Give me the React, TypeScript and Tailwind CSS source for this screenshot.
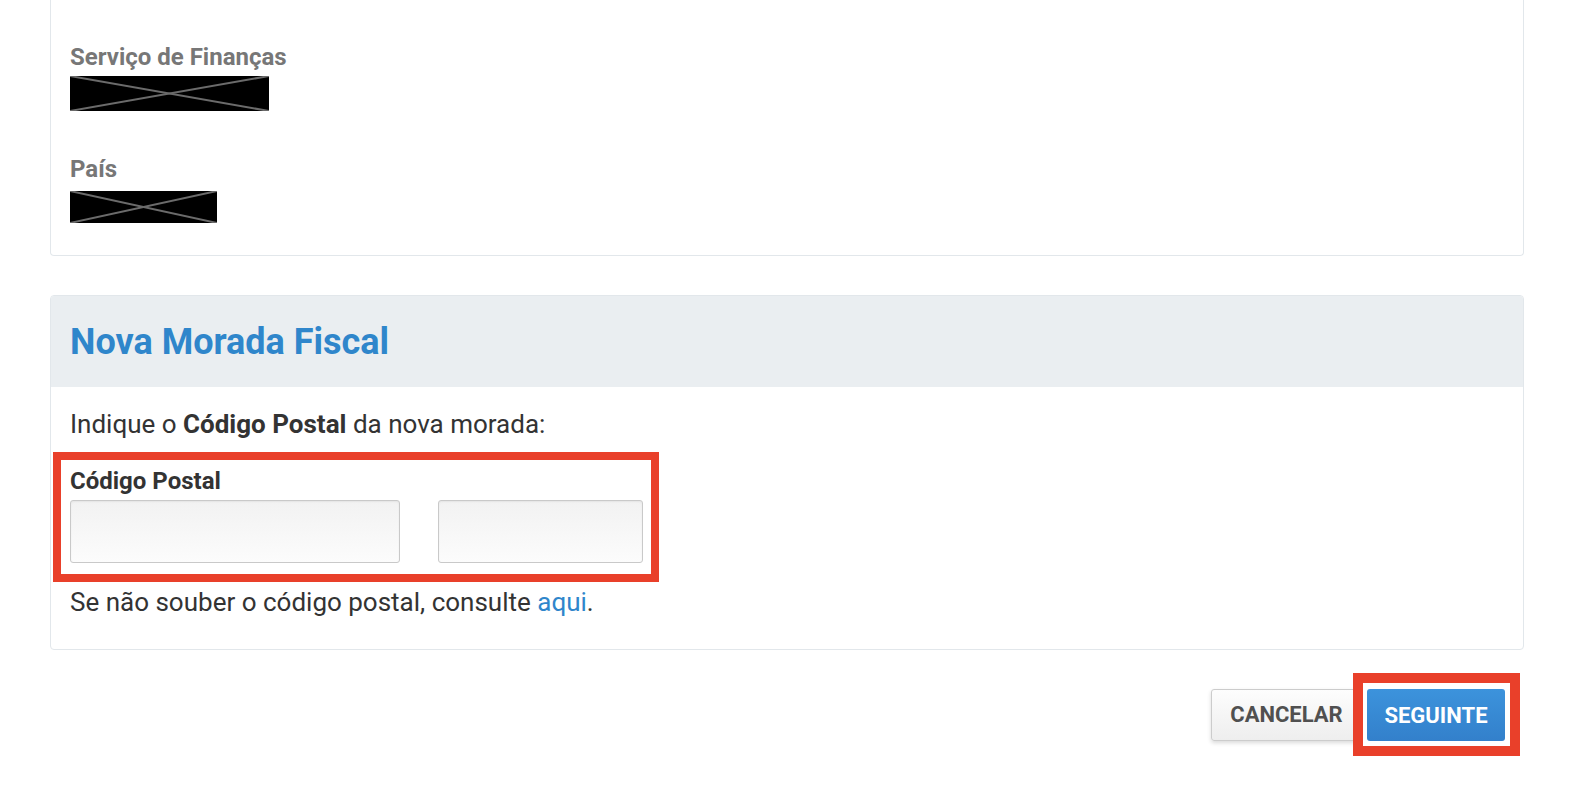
import React from 'react';

function Redacted({ width, height }: { width: number; height: number }) {
  return (
    <svg width={width} height={height} className="block bg-black">
      <line x1="0" y1="0" x2={width} y2={height} stroke="#6b6b6b" strokeWidth="2" />
      <line x1="0" y1={height} x2={width} y2="0" stroke="#6b6b6b" strokeWidth="2" />
    </svg>
  );
}

function Label({ children }: { children: React.ReactNode }) {
  return <div className="text-[24px] leading-[28px] font-bold text-[#777777]">{children}</div>;
}

function App() {
  return (
    <div
      className="min-h-screen bg-white pl-[50px] pr-[46px]"
      style={{ fontFamily: 'Roboto, "Liberation Sans", sans-serif' }}
    >
      {/* dados actuais */}
      <div className="border border-t-0 border-[#e2e7eb] rounded-b-[4px] px-[19px] pt-[43px] pb-[32px]">
        <Label>Serviço de Finanças</Label>
        <div className="mt-[5px]">
          <Redacted width={199} height={35} />
        </div>
        <div className="mt-[44px]">
          <Label>País</Label>
        </div>
        <div className="mt-[8px]">
          <Redacted width={147} height={32} />
        </div>
      </div>

      {/* nova morada */}
      <div className="mt-[39px] border border-[#e2e7eb] rounded-[4px] overflow-hidden">
        <div className="h-[91px] bg-[#eaeef1] flex items-center px-[19px]">
          <h2 className="text-[36px] font-bold text-[#2f86cb] leading-none">Nova Morada Fiscal</h2>
        </div>
        <div className="px-[19px] pt-[22px] pb-[32px] text-[26px] leading-[30px] text-[#333333]">
          <p>
            Indique o <b className="font-bold">Código Postal</b> da nova morada:
          </p>
          <div className="mt-[13px] -ml-[17px] w-[606px] border-[8px] border-[#e9402a] pl-[9px] pt-[7px] pb-[11px]">
            <div className="text-[24px] leading-[28px] font-bold text-[#333333]">Código Postal</div>
            <div className="mt-[5px] flex gap-[38px]">
              <input
                type="text"
                className="w-[330px] h-[63px] border border-[#c9c9c9] rounded-[3px] bg-gradient-to-b from-[#f2f2f2] to-[#fcfcfc] shadow-[inset_0_1px_2px_rgba(0,0,0,0.06)] outline-none"
              />
              <input
                type="text"
                className="w-[205px] h-[63px] border border-[#c9c9c9] rounded-[3px] bg-gradient-to-b from-[#f2f2f2] to-[#fcfcfc] shadow-[inset_0_1px_2px_rgba(0,0,0,0.06)] outline-none"
              />
            </div>
          </div>
          <p className="mt-[5px]">
            Se não souber o código postal, consulte <a className="text-[#2f86cb]">aqui</a>.
          </p>
        </div>
      </div>

      {/* acções */}
      <div className="mt-[23px] flex justify-end items-center">
        <button className="w-[151px] h-[52px] border border-[#cccccc] rounded-[3px] bg-gradient-to-b from-[#fdfdfd] to-[#eeeeee] shadow-[0_2px_4px_rgba(0,0,0,0.15)] text-[22px] font-bold text-[#505050]">
          CANCELAR
        </button>
        <div className="-ml-[9px] mr-[4px] border-[10px] border-[#e9402a] bg-white pl-[4px] pt-[6px] pr-[5px] pb-[5px]">
          <button className="w-[138px] h-[52px] rounded-[3px] bg-gradient-to-b from-[#3c93dc] to-[#3380cb] text-[22px] font-bold text-white">
            SEGUINTE
          </button>
        </div>
      </div>
    </div>
  );
}

export default App;
